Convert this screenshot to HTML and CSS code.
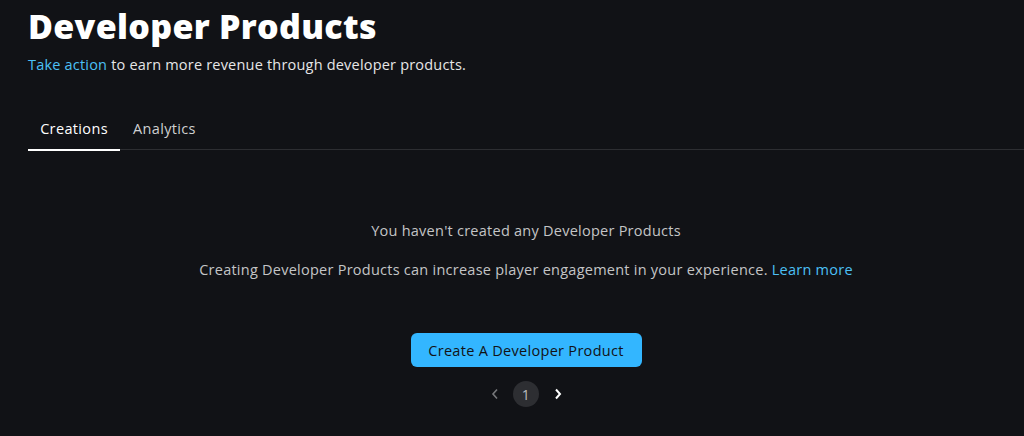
FILE: index.html
```html
<!DOCTYPE html>
<html lang="en">
<head>
<meta charset="utf-8">
<title>Developer Products</title>
<link rel="stylesheet" href="styles.css">
</head>
<body>
<main class="page">
  <header class="header">
    <h1 class="title">Developer Products</h1>
    <p class="subtitle"><a class="link" href="#">Take action</a> to earn more revenue through developer products.</p>
  </header>
  <nav class="tabs">
    <a class="tab tab-active" href="#">Creations</a>
    <a class="tab" href="#">Analytics</a>
  </nav>
  <section class="empty">
    <p class="empty-title">You haven't created any Developer Products</p>
    <p class="empty-text">Creating Developer Products can increase player engagement in your experience. <a class="link" href="#">Learn more</a></p>
    <button class="btn-primary" type="button">Create A Developer Product</button>
    <div class="pager">
      <span class="pager-arrow pager-prev">
        <svg width="8" height="12" viewBox="0 0 8 12"><path d="M6 1.5 L2 6 L6 10.5" fill="none" stroke="currentColor" stroke-width="1.6"/></svg>
      </span>
      <span class="pager-page">1</span>
      <span class="pager-arrow pager-next">
        <svg width="8" height="12" viewBox="0 0 8 12"><path d="M2 1.5 L6 6 L2 10.5" fill="none" stroke="currentColor" stroke-width="2"/></svg>
      </span>
    </div>
  </section>
</main>
</body>
</html>
```
FILE: styles.css
```css
* { box-sizing: border-box; }
html, body { margin: 0; padding: 0; }
body {
  background: #111216;
  color: #ffffff;
  font-family: "Open Sans", "Noto Sans", sans-serif;
  width: 1024px;
  height: 436px;
  overflow: hidden;
}
.page { padding: 0 0 0 28px; }
.header { padding-top: 4px; }
.title {
  margin: 0;
  font-size: 34px;
  line-height: 44px;
  font-weight: 800;
  letter-spacing: 0.3px;
  color: #ffffff;
}
.subtitle {
  margin: 7px 0 0;
  font-size: 14.5px;
  line-height: 20px;
  color: #e6e6e7;
  letter-spacing: 0.2px;
}
.link { color: #4cc0f5; text-decoration: none; }
.tabs {
  margin-top: 33px;
  display: flex;
  border-bottom: 1px solid #2d2e32;
  height: 42px;
}
.tab {
  display: flex;
  align-items: center;
  justify-content: center;
  padding: 0 13px;
  font-size: 14.5px;
  letter-spacing: 0.35px;
  color: #cfd0d1;
  text-decoration: none;
  height: 41px;
  padding-bottom: 0;
}
.tab-active {
  color: #ffffff;
  width: 92px;
  border-bottom: 2px solid #ffffff;
  margin-bottom: -1px;
  height: 43px;
}
.empty {
  display: flex;
  flex-direction: column;
  align-items: center;
  padding-top: 71px;
  letter-spacing: 0.25px;
}
.empty-title {
  margin: 0;
  font-size: 14.5px;
  line-height: 20px;
  color: #c4c5c6;
}
.empty-text {
  margin: 19px 0 0;
  font-size: 14.5px;
  line-height: 20px;
  color: #c4c5c6;
}
.btn-primary {
  margin-top: 53px;
  width: 231px;
  height: 34px;
  border: none;
  border-radius: 6px;
  background: #33b6ff;
  color: #121215;
  font-family: inherit;
  font-size: 14.5px;
  font-weight: 500;
  letter-spacing: 0.3px;
}
.pager {
  margin-top: 14px;
  display: flex;
  align-items: center;
  gap: 8px;
}
.pager-arrow {
  width: 21px;
  height: 26px;
  display: flex;
  align-items: center;
  justify-content: center;
}
.pager-prev { color: #77787b; }
.pager-next { color: #ffffff; }
.pager-page {
  width: 26px;
  height: 26px;
  border-radius: 50%;
  background: #2d2e32;
  color: #bdbec0;
  font-size: 14px;
  display: flex;
  align-items: center;
  justify-content: center;
}
```
